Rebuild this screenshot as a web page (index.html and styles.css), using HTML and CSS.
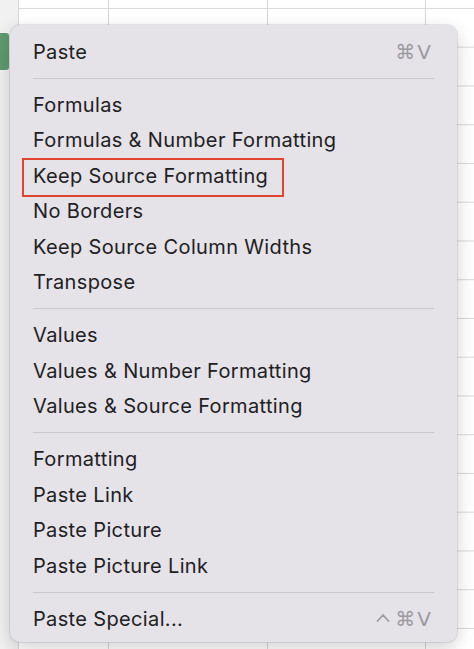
FILE: index.html
```html
<!DOCTYPE html>
<html>
<head>
<meta charset="utf-8">
<link rel="stylesheet" href="styles.css">
</head>
<body>
<div class="sheet">
  <div class="col col-head"></div>
  <div class="col c1"></div>
  <div class="col c2"></div>
  <div class="col c3"></div>
  <div class="col c4"></div>
</div>
<div class="cell-edge"></div>
<div class="menu">
  <div class="item"><span>Paste</span><span class="key">⌘V</span></div>
  <div class="sep"></div>
  <div class="item"><span>Formulas</span></div>
  <div class="item"><span>Formulas &amp; Number Formatting</span></div>
  <div class="item"><span>Keep Source Formatting</span></div>
  <div class="item"><span>No Borders</span></div>
  <div class="item"><span>Keep Source Column Widths</span></div>
  <div class="item"><span>Transpose</span></div>
  <div class="sep"></div>
  <div class="item"><span>Values</span></div>
  <div class="item"><span>Values &amp; Number Formatting</span></div>
  <div class="item"><span>Values &amp; Source Formatting</span></div>
  <div class="sep"></div>
  <div class="item"><span>Formatting</span></div>
  <div class="item"><span>Paste Link</span></div>
  <div class="item"><span>Paste Picture</span></div>
  <div class="item"><span>Paste Picture Link</span></div>
  <div class="sep"></div>
  <div class="item"><span>Paste Special...</span><span class="key"><svg class="caret" width="14" height="9" viewBox="0 0 14 9"><polyline points="1.5,8 7,2 12.5,8" fill="none" stroke="#9c9aa0" stroke-width="1.7" stroke-linecap="round" stroke-linejoin="round"/></svg>⌘V</span></div>
  <div class="highlight"></div>
</div>
</body>
</html>
```
FILE: styles.css
```css
html, body {
  margin: 0;
  padding: 0;
}
body {
  width: 474px;
  height: 649px;
  overflow: hidden;
  position: relative;
  background: #ffffff;
  font-family: Inter, "Liberation Sans", sans-serif;
}
.sheet {
  display: flex;
  height: 649px;
  background-image: repeating-linear-gradient(to bottom, transparent 0, transparent 7.75px, #d9d9d9 7.75px, #d9d9d9 8.75px, transparent 8.75px, transparent 38.75px);
  background-size: 100% 38.75px;
}
.col {
  height: 100%;
  border-right: 1px solid #d6d6d6;
  box-sizing: border-box;
}
.col-head { width: 19px; background: #f1f1f1; }
.c1 { width: 90px; }
.c2 { width: 159px; }
.c3 { width: 158px; }
.c4 { flex: 1; border-right: none; }
.cell-edge {
  position: absolute;
  left: 0;
  top: 33px;
  width: 9px;
  height: 37px;
  background: #5e9a70;
  border-radius: 0 3px 3px 0;
}
.menu {
  position: absolute;
  left: 10px;
  top: 25px;
  width: 447px;
  height: 617px;
  box-sizing: border-box;
  padding: 9px 0 5px;
  background: #e5e3e8;
  border-radius: 10px;
  box-shadow: 0 0 0 1px rgba(0,0,0,0.08), 0 6px 18px rgba(0,0,0,0.18);
  display: flex;
  flex-direction: column;
}
.item {
  height: 35.5px;
  display: flex;
  align-items: center;
  justify-content: space-between;
  padding: 0 24px 0 23px;
  font-size: 20px;
  color: #212023;
  letter-spacing: 0.35px;
}
.key {
  display: flex;
  align-items: center;
  color: #9c9aa0;
  font-family: "DejaVu Sans", sans-serif;
  font-size: 20px;
  letter-spacing: 2px;
}
.caret {
  margin-right: 5px;
  margin-bottom: 3px;
}
.sep {
  height: 1px;
  margin: 8.25px 23px;
  background: #c9c7cc;
  flex: none;
}
.highlight {
  position: absolute;
  left: 12px;
  top: 133px;
  width: 262px;
  height: 39px;
  box-sizing: border-box;
  border: 2px solid #e0452f;
}
```
